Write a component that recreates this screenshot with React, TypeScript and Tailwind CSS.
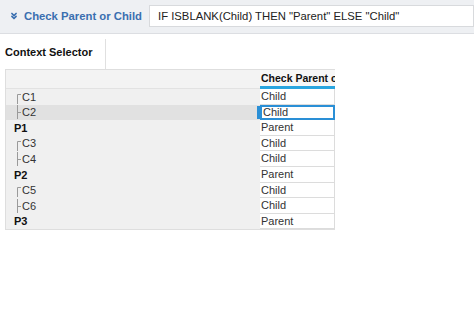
import { ChevronsDown } from 'lucide-react'

type Row = { label: string; value: string; parent?: boolean; first?: boolean; selected?: boolean }

const rows: Row[] = [
  { label: 'C1', value: 'Child', first: true },
  { label: 'C2', value: 'Child', selected: true },
  { label: 'P1', value: 'Parent', parent: true },
  { label: 'C3', value: 'Child', first: true },
  { label: 'C4', value: 'Child' },
  { label: 'P2', value: 'Parent', parent: true },
  { label: 'C5', value: 'Child', first: true },
  { label: 'C6', value: 'Child' },
  { label: 'P3', value: 'Parent', parent: true },
]

function TreeLine({ first }: { first?: boolean }) {
  return (
    <svg width="6" height="14" viewBox="0 0 6 14" className="shrink-0">
      {first ? (
        <path d="M1.5 14V4.5H5" stroke="#9a9a9a" strokeWidth="1" fill="none" />
      ) : (
        <path d="M1.5 0V14M1.5 7.5H5" stroke="#9a9a9a" strokeWidth="1" fill="none" />
      )}
    </svg>
  )
}

export default function App() {
  return (
    <div className="w-[474px] h-[335px] bg-white text-[11px] text-[#222] font-['Liberation_Sans',Arial,sans-serif] overflow-hidden">
      {/* formula bar */}
      <div className="h-[34px] bg-[#eef0f3] border-b border-[#dcdee2] flex items-start pt-[5px]">
        <div className="w-[149px] h-[22px] flex items-center pl-[9px] gap-[5px] whitespace-nowrap">
          <ChevronsDown size={10} strokeWidth={4} className="text-[#3a6fb0]" />
          <span className="font-bold text-[#3a6fb0] text-[11.3px]">Check Parent or Child</span>
        </div>
        <div className="flex-1 h-[22px] bg-white border border-[#d8dadd] flex items-center pl-[8px] text-[11.3px] whitespace-nowrap">
          IF ISBLANK(Child) THEN "Parent" ELSE "Child"
        </div>
      </div>

      {/* context selector */}
      <div className="flex h-[35px]">
        <div className="w-[105px] flex items-center pl-[5px] pt-[1px] font-bold text-[#111]">Context Selector</div>
        <div className="w-px bg-[#e0e0e0] mt-[5px]" />
      </div>

      {/* grid */}
      <div className="ml-[5px] w-[330px] border border-[#dedede] border-r-0 flex flex-col">
        <div className="flex h-[19px]">
          <div className="w-[254px] bg-[#f3f3f3] border-b border-[#e2e2e2]" />
          <div className="w-[75px] flex flex-col bg-[#f7f7f7] overflow-hidden">
            <div className="flex-1 pl-[1px] flex items-center font-bold text-[10.5px] text-[#111] whitespace-nowrap leading-none">Check Parent or Child</div>
            <div className="h-[3px] bg-[#2aa5df]" />
          </div>
        </div>
        {rows.map((r) => (
          <div key={r.label} className="flex h-[15.6px]">
            <div
              className={`w-[254px] flex items-center ${r.selected ? 'bg-[#e1e1e1]' : 'bg-[#f0f0f0]'} ${r.parent ? 'pl-[8px]' : 'pl-[10px]'}`}
            >
              {!r.parent && <TreeLine first={r.first} />}
              <span className={r.parent ? 'font-bold text-[#111]' : 'text-[#333]'}>{r.label}</span>
            </div>
            <div className="w-[75px] relative">
              {r.selected && <div className="absolute left-[-3px] top-[1px] w-[3px] h-[13px] bg-[#2a8fd6]" />}
              <div
                className={`h-full flex items-center pl-[1px] bg-white ${
                  r.selected ? 'border-2 border-[#2a8fd6]' : 'border-b border-r border-[#dcdcdc]'
                } text-[#333]`}
              >
                {r.value}
              </div>
            </div>
          </div>
        ))}
      </div>
    </div>
  )
}
